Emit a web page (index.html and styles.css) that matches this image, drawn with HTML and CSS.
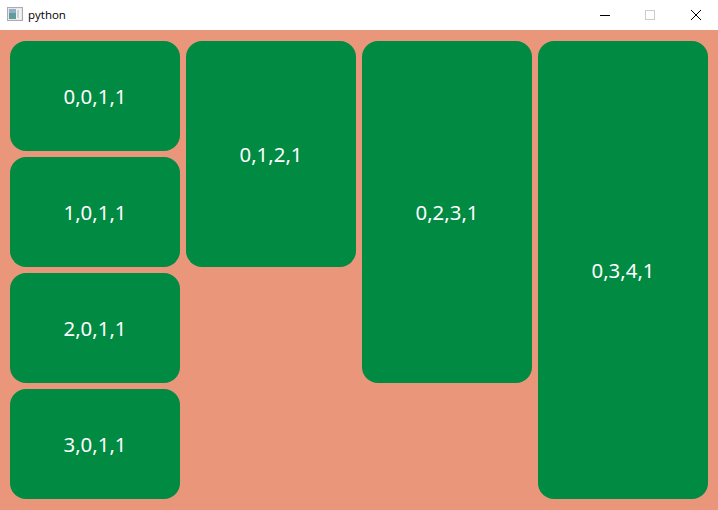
FILE: index.html
```html
<!DOCTYPE html>
<html lang="en">
<head>
<meta charset="utf-8">
<title>python</title>
<link rel="stylesheet" href="styles.css">
</head>
<body>
<div class="window">
  <header class="titlebar">
    <svg class="app-icon" width="16" height="16" viewBox="0 0 16 16">
      <rect x="0.5" y="0.5" width="15" height="13" fill="#e8e8e8" stroke="#a9adb3"/>
      <rect x="2" y="2" width="7" height="10" fill="#5f9c9a"/>
      <rect x="2" y="2" width="7" height="4" fill="#8fb0c9"/>
      <rect x="9" y="2" width="5" height="10" fill="#f2f4f4"/>
      <rect x="10" y="3" width="2" height="8" fill="#ccd2d6"/>
    </svg>
    <span class="title">python</span>
    <div class="controls">
      <span class="ctl"><svg width="10" height="10" viewBox="0 0 10 10"><path d="M0 5.5H10" stroke="#000" fill="none"/></svg></span>
      <span class="ctl ctl-wide"><svg width="10" height="10" viewBox="0 0 10 10"><rect x="0.5" y="0.5" width="9" height="9" stroke="#ccc" fill="none"/></svg></span>
      <span class="ctl"><svg width="10" height="10" viewBox="0 0 10 10"><path d="M0 0L10 10M10 0L0 10" stroke="#000" fill="none" stroke-width="1"/></svg></span>
    </div>
  </header>
  <main class="grid">
    <div class="cell r1 c1">0,0,1,1</div>
    <div class="cell r2 c1">1,0,1,1</div>
    <div class="cell r3 c1">2,0,1,1</div>
    <div class="cell r4 c1">3,0,1,1</div>
    <div class="cell c2 span2">0,1,2,1</div>
    <div class="cell c3 span3">0,2,3,1</div>
    <div class="cell c4 span4">0,3,4,1</div>
  </main>
</div>
</body>
</html>
```
FILE: styles.css
```css
html, body {
  margin: 0;
  padding: 0;
}
.window {
  width: 718px;
  height: 510px;
  display: flex;
  flex-direction: column;
  background: #e9967a;
  overflow: hidden;
}
.titlebar {
  height: 30px;
  flex: none;
  background: #fff;
  display: flex;
  align-items: center;
  padding-left: 7px;
  font-family: "Open Sans", "Liberation Sans", sans-serif;
  font-size: 11.5px;
  color: #000;
}
.title {
  margin-left: 5px;
  margin-bottom: 2px;
}
.controls {
  margin-left: auto;
  display: flex;
  height: 30px;
}
.ctl {
  width: 45px;
  display: flex;
  align-items: center;
  justify-content: center;
}
.ctl-wide {
  width: 46px;
}
.grid {
  display: grid;
  grid-template-columns: repeat(4, 170px);
  grid-template-rows: repeat(4, 110px);
  gap: 6px;
  padding: 11px 10px;
}
.cell {
  background: #008a42;
  border-radius: 16px;
  display: flex;
  align-items: center;
  justify-content: center;
  color: #fff;
  font-family: "Noto Sans", "Open Sans", sans-serif;
  font-size: 20.4px;
}
.r1 { grid-row: 1; }
.r2 { grid-row: 2; }
.r3 { grid-row: 3; }
.r4 { grid-row: 4; }
.c1 { grid-column: 1; }
.c2 { grid-column: 2; }
.c3 { grid-column: 3; }
.c4 { grid-column: 4; }
.span2 { grid-row: 1 / span 2; }
.span3 { grid-row: 1 / span 3; }
.span4 { grid-row: 1 / span 4; }
```
